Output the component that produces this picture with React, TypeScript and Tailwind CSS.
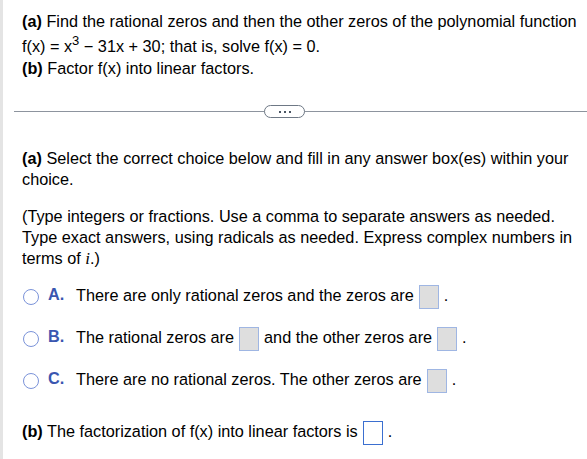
export default function App() {
  const box = "inline-block w-[20px] h-[24px] bg-[#dedede] border border-[#9fb6e3] align-middle mx-[5px]";
  const opts = [
    {
      l: "A.",
      c: (
        <>
          There are only rational zeros and the zeros are
          <span className={box} />.
        </>
      ),
    },
    {
      l: "B.",
      c: (
        <>
          The rational zeros are
          <span className={box} />
          and the other zeros are
          <span className={box} />.
        </>
      ),
    },
    {
      l: "C.",
      c: (
        <>
          There are no rational zeros. The other zeros are
          <span className={box} />.
        </>
      ),
    },
  ];
  return (
    <div className="w-[587px] h-[459px] bg-white border-l-[3px] border-[#e4e4e4] overflow-hidden text-black text-[16.25px] leading-[22px] font-['Liberation_Sans',Arial,sans-serif]">
      <div className="pl-[19px] pt-[10px] pr-1">
        <p className="whitespace-nowrap">
          <b>(a)</b> Find the rational zeros and then the other zeros of the polynomial function
        </p>
        <p className="mt-[3px]">
          f(x) = x<sup className="text-[13px] relative -top-[7px]">3</sup> − 31x + 30; that is, solve f(x) = 0.
        </p>
        <p>
          <b>(b)</b> Factor f(x) into linear factors.
        </p>
      </div>

      {/* divider with collapse button */}
      <div className="relative mt-[32px] ml-[11px] h-[1px] bg-[#8d949e]">
        <div className="absolute left-[250px] -top-[6px] w-[41px] h-[13px] rounded-full border border-[#6e7885] bg-white flex items-center justify-center gap-[3px]">
          <span className="w-[2px] h-[2px] bg-[#4a5563]" />
          <span className="w-[2px] h-[2px] bg-[#4a5563]" />
          <span className="w-[2px] h-[2px] bg-[#4a5563]" />
        </div>
      </div>

      <div className="pl-[19px] pr-2 leading-[21px]">
        <p className="mt-[36px]">
          <b>(a)</b> Select the correct choice below and fill in any answer box(es) within your choice.
        </p>
        <p className="mt-[16px]">
          (Type integers or fractions. Use a comma to separate answers as needed. Type exact answers, using
          radicals as needed. Express complex numbers in terms of{" "}
          <i className="font-['Liberation_Serif',serif] text-[17px]">i</i>.)
        </p>
        <div className="mt-[16px] flex flex-col gap-[18px]">
          {opts.map((o) => (
            <div key={o.l} className="flex items-center h-[24px]">
              <span className="ml-[1px] w-[16px] h-[16px] rounded-full border-[1.5px] border-[#7b93d9] bg-white" />
              <span className="ml-[9px] w-[28px] font-bold text-[#3a56b0] relative -top-[3px]">{o.l}</span>
              <span className="whitespace-nowrap">{o.c}</span>
            </div>
          ))}
        </div>
        <p className="mt-[28px] whitespace-nowrap">
          <b>(b)</b> The factorization of f(x) into linear factors is
          <span className="inline-block w-[20px] h-[24px] bg-white border border-[#3b6fd0] align-middle mx-[5px]" />.
        </p>
      </div>
    </div>
  );
}
